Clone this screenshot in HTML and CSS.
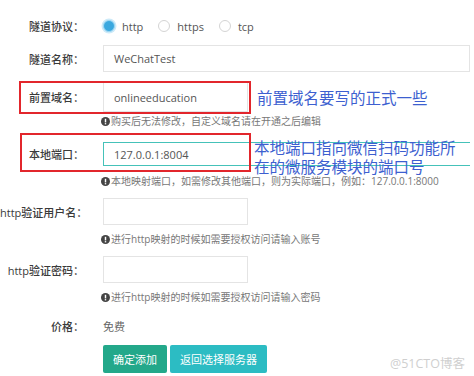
FILE: index.html
```html
<!DOCTYPE html>
<html lang="zh">
<head>
<meta charset="utf-8">
<link rel="stylesheet" href="styles.css">
</head>
<body>
<div class="form">
  <div class="row r1">
    <div class="label">隧道协议：</div>
    <div class="radios">
      <span class="radio on"></span><span class="rtext">http</span>
      <span class="radio"></span><span class="rtext">https</span>
      <span class="radio"></span><span class="rtext">tcp</span>
    </div>
  </div>
  <div class="row r2">
    <div class="label">隧道名称：</div>
    <div class="input wide">WeChatTest</div>
  </div>
  <div class="row r3">
    <div class="label">前置域名：</div>
    <div class="input tall">onlineeducation</div>
    <div class="mark m1"></div>
    <div class="note n1">前置域名要写的正式一些</div>
  </div>
  <div class="hint h1"><svg class="ic" viewBox="0 0 10 10"><circle cx="5" cy="5" r="5" fill="#444"/><rect x="4.2" y="2" width="1.6" height="4" fill="#fff"/><rect x="4.2" y="6.8" width="1.6" height="1.4" fill="#fff"/></svg>购买后无法修改，自定义域名请在开通之后编辑</div>
  <div class="row r4">
    <div class="label">本地端口：</div>
    <div class="input focus">127.0.0.1:8004</div>
    <div class="ext"></div>
    <div class="mark m2"></div>
    <div class="note n2">本地端口指向微信扫码功能所<br>在的微服务模块的端口号</div>
  </div>
  <div class="hint h2"><svg class="ic" viewBox="0 0 10 10"><circle cx="5" cy="5" r="5" fill="#444"/><rect x="4.2" y="2" width="1.6" height="4" fill="#fff"/><rect x="4.2" y="6.8" width="1.6" height="1.4" fill="#fff"/></svg>本地映射端口，如需修改其他端口，则为实际端口，例如：127.0.0.1:8000</div>
  <div class="row r5">
    <div class="label">http验证用户名：</div>
    <div class="input"></div>
  </div>
  <div class="hint h3"><svg class="ic" viewBox="0 0 10 10"><circle cx="5" cy="5" r="5" fill="#444"/><rect x="4.2" y="2" width="1.6" height="4" fill="#fff"/><rect x="4.2" y="6.8" width="1.6" height="1.4" fill="#fff"/></svg>进行http映射的时候如需要授权访问请输入账号</div>
  <div class="row r6">
    <div class="label">http验证密码：</div>
    <div class="input"></div>
  </div>
  <div class="hint h4"><svg class="ic" viewBox="0 0 10 10"><circle cx="5" cy="5" r="5" fill="#444"/><rect x="4.2" y="2" width="1.6" height="4" fill="#fff"/><rect x="4.2" y="6.8" width="1.6" height="1.4" fill="#fff"/></svg>进行http映射的时候如需要授权访问请输入密码</div>
  <div class="row r7">
    <div class="label">价格：</div>
    <div class="price">免费</div>
  </div>
  <div class="row r8">
    <div class="label"></div>
    <div class="btns">
      <span class="btn ok">确定添加</span>
      <span class="btn back">返回选择服务器</span>
    </div>
  </div>
</div>
<div class="wm">@51CTO博客</div>
</body>
</html>
```

FILE: styles.css
```css
html, body {
  margin: 0;
  padding: 0;
  background: #fff;
}
body {
  width: 474px;
  height: 376px;
  overflow: hidden;
  position: relative;
  font-family: "Open Sans", "Noto Sans CJK SC", sans-serif;
  color: #333;
}
.form {
  padding-top: 16px;
  display: flex;
  flex-direction: column;
}
.row {
  display: flex;
  align-items: center;
  position: relative;
}
.label {
  width: 84px;
  flex: none;
  text-align: right;
  font-size: 11px;
  font-weight: 500;
  color: #3a3a3a;
  margin-right: 19px;
  white-space: nowrap;
  font-family: "Open Sans", "Noto Sans CJK SC", sans-serif;
}
.r1 { height: 20px; }
.radios {
  display: flex;
  align-items: center;
  font-size: 11px;
  color: #555;
}
.radio {
  width: 12px;
  height: 12px;
  border: 1px solid #d4d4d4;
  border-radius: 50%;
  box-sizing: border-box;
  margin-right: 7px;
}
.radio.on {
  background: #3aa8df;
  border: 1px solid #9bd6f3;
  box-shadow: 0 0 0 1.5px #cdeaf8;
}
.rtext { margin-right: 15px; }
.input {
  width: 145px;
  height: 27px;
  box-sizing: border-box;
  border: 1px solid #e4e4e4;
  font-size: 11px;
  color: #555;
  padding-left: 10px;
  display: flex;
  align-items: center;
}
.input.wide { width: 367px; }
.r2 { margin-top: 9px; }
.r3 { margin-top: 10px; }
.input.tall { height: 30px; }
.mark {
  position: absolute;
  border: 2px solid #e2262c;
  box-sizing: border-box;
}
.m1 { left: 19px; top: -1px; width: 232px; height: 33px; }
.m2 { left: 20px; top: -9px; width: 231px; height: 39px; }
.note {
  position: absolute;
  font-family: "Noto Sans CJK SC", sans-serif;
  font-size: 15.5px;
  color: #3d5fd0;
  line-height: 19px;
  white-space: nowrap;
}
.n1 { left: 257px; top: 6px; }
.n2 { left: 254px; top: -4px; }
.hint {
  margin-left: 101px;
  height: 12px;
  line-height: 12px;
  display: flex;
  align-items: center;
  font-size: 10px;
  color: #777;
  white-space: nowrap;
  font-family: "Open Sans", "Noto Sans CJK SC", sans-serif;
}
.ic { width: 9px; height: 9px; margin-right: 1px; flex: none; }
.h1 { margin-top: 3px; }
.r4 { margin-top: 15px; }
.input.focus {
  height: 24px;
  border-color: #45c2b9;
  width: 147px;
}
.ext {
  width: 220px;
  height: 24px;
  box-sizing: border-box;
  border-top: 1px solid #45c2b9;
  border-bottom: 1px solid #45c2b9;
}
.h2 { margin-top: 9px; }
.r5 { margin-top: 11px; }
.h3 { margin-top: 8px; }
.r6 { margin-top: 11px; }
.h4 { margin-top: 8px; }
.r7 { margin-top: 15px; height: 16px; }
.price { font-size: 11px; color: #666; }
.r8 { margin-top: 11px; }
.btns { display: flex; gap: 3px; }
.btn {
  height: 28px;
  display: flex;
  align-items: center;
  justify-content: center;
  color: #fff;
  font-size: 11px;
  border-radius: 2px;
  font-family: "Noto Sans CJK SC", sans-serif;
}
.btn.ok { width: 64px; background: #23a88a; }
.btn.back { width: 97px; background: #2cbcc3; }
.wm {
  position: absolute;
  left: 390px;
  top: 353px;
  font-size: 12.5px;
  color: #cfcfcf;
  font-family: "Open Sans", "Noto Sans CJK SC", sans-serif;
}
```
